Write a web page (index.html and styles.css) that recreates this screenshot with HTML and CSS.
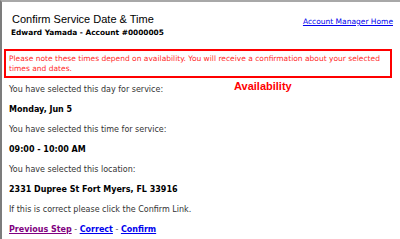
FILE: index.html
```html
<!DOCTYPE html>
<html lang="en">
<head>
    <meta charset="UTF-8">
    <title>Confirm Service Date &amp; Time</title>
    <link rel="stylesheet" href="styles.css">
</head>
<body>
    <div class="frame">
        <div class="header">
            <div class="titles">
                <h1 class="page-title">Confirm Service Date &amp; Time</h1>
                <p class="account">Edward Yamada - Account #0000005</p>
            </div>
            <a href="#" class="home-link">Account Manager Home</a>
        </div>

        <div class="notice">
            Please note these times depend on availability. You will receive a confirmation about your selected times and dates.
        </div>

        <div class="prompt-row">
            <p class="prompt">You have selected this day for service:</p>
            <span class="availability">Availability</span>
        </div>
        <p class="value">Monday, Jun 5</p>

        <p class="prompt">You have selected this time for service:</p>
        <p class="value">09:00 - 10:00 AM</p>

        <p class="prompt">You have selected this location:</p>
        <p class="value">2331 Dupree St Fort Myers, FL 33916</p>

        <p class="prompt">If this is correct please click the Confirm Link.</p>

        <p class="actions">
            <a href="#" class="step-link visited">Previous Step</a> -
            <a href="#" class="step-link">Correct</a> -
            <a href="#" class="step-link">Confirm</a>
        </p>
    </div>
</body>
</html>
```

FILE: styles.css
```css
* {
    margin: 0;
    padding: 0;
    box-sizing: border-box;
}

body {
    font-family: "DejaVu Sans", Verdana, sans-serif;
    font-size: 8px;
    color: #333333;
    background: #ffffff;
}

.frame {
    min-height: 239px;
    border-top: 2px solid #a8a8a8;
    border-left: 2px solid #7c7c7c;
    padding: 0 8px 0 2px;
}

.header {
    display: flex;
    justify-content: space-between;
    align-items: flex-start;
    padding-top: 10px;
}

.titles {
    padding-left: 8px;
}

.page-title {
    font-family: "Liberation Sans", Arial, sans-serif;
    font-size: 11px;
    font-weight: normal;
    line-height: 14px;
    color: #000000;
}

.account {
    margin-top: 2px;
    margin-left: -1px;
    font-size: 7.4px;
    font-weight: bold;
    line-height: 10px;
    color: #000000;
}

.home-link {
    font-size: 7.5px;
    line-height: 10px;
    margin-top: 5px;
    margin-right: -1px;
    color: #0000ee;
}

.notice {
    margin-top: 11px;
    border: 2px solid #ff0000;
    padding: 3px 3px 2px 3px;
    font-size: 7.5px;
    line-height: 10px;
    color: #ff2a2a;
}

.prompt-row {
    display: grid;
    grid-template-columns: 230px auto;
    align-items: start;
}

.prompt,
.value,
.actions {
    margin: 8px 0 8px 5px;
    line-height: 12px;
}

.prompt-row .prompt {
    margin-top: 6px;
    margin-bottom: 0;
}

.value {
    font-weight: bold;
    color: #000000;
}

.availability {
    font-family: "Liberation Sans", Arial, sans-serif;
    font-size: 11px;
    font-weight: bold;
    line-height: 12px;
    color: #ff0000;
    margin-top: 2px;
}

.actions {
    color: #555555;
}

.step-link {
    font-weight: bold;
    color: #0000ee;
}

.step-link.visited {
    color: #800080;
}
```
